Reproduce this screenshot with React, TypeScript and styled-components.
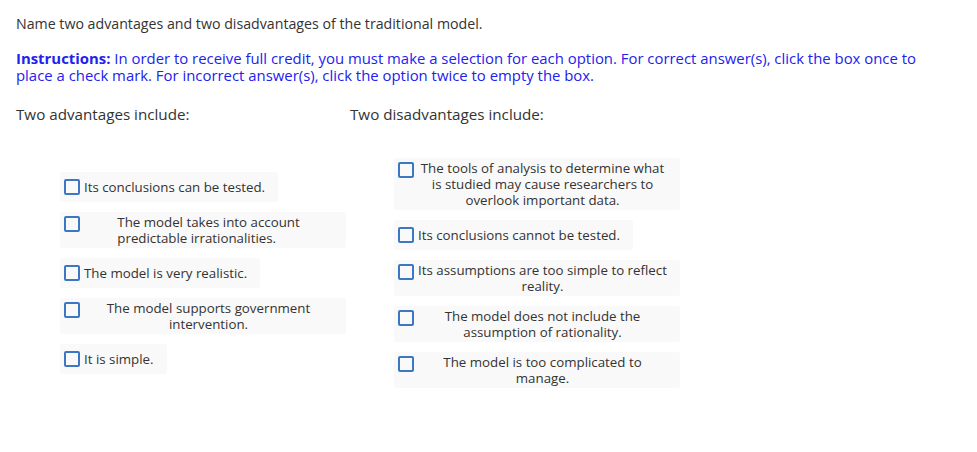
import * as React from 'react';
import styled, { createGlobalStyle } from 'styled-components';

type Align = 'left' | 'block' | 'center';
type Option = { lines: string[]; align?: Align };

const advantages: Option[] = [
  { lines: ['Its conclusions can be tested.'] },
  { lines: ['The model takes into account', 'predictable irrationalities.'], align: 'block' },
  { lines: ['The model is very realistic.'] },
  { lines: ['The model supports government', 'intervention.'], align: 'center' },
  { lines: ['It is simple.'] },
];

const disadvantages: Option[] = [
  {
    lines: ['The tools of analysis to determine what', 'is studied may cause researchers to', 'overlook important data.'],
    align: 'center',
  },
  { lines: ['Its conclusions cannot be tested.'] },
  { lines: ['Its assumptions are too simple to reflect', 'reality.'], align: 'center' },
  { lines: ['The model does not include the', 'assumption of rationality.'], align: 'center' },
  { lines: ['The model is too complicated to', 'manage.'], align: 'center' },
];

const OptionRow: React.FC<{ option: Option }> = ({ option }) => {
  const multi = option.lines.length > 1;
  return (
    <Row $multi={multi}>
      <Box $multi={multi} />
      <LabelCell>
        <Label $align={option.align || 'left'}>
          {option.lines.map((line, i) => (
            <React.Fragment key={line}>
              {i > 0 && <br />}
              {line}
            </React.Fragment>
          ))}
        </Label>
      </LabelCell>
    </Row>
  );
};

export default function App() {
  return (
    <>
      <GlobalStyle />
      <Page>
        <Prompt>Name two advantages and two disadvantages of the traditional model.</Prompt>
        <Instructions>
          <b>Instructions:</b>{' '}
          <span>
            In order to receive full credit, you must make a selection for each option. For correct answer(s), click
            the box once to place a check mark. For incorrect answer(s), click the option twice to empty the box.
          </span>
        </Instructions>
        <Columns>
          <Heading>Two advantages include:</Heading>
          <Heading>Two disadvantages include:</Heading>
          <OptionList>
            {advantages.map(o => <OptionRow key={o.lines[0]} option={o} />)}
          </OptionList>
          <OptionList>
            {disadvantages.map(o => <OptionRow key={o.lines[0]} option={o} />)}
          </OptionList>
        </Columns>
      </Page>
    </>
  );
}

const GlobalStyle = createGlobalStyle`
  body {
    margin: 0;
    background: #fff;
    font-family: "Open Sans", Lato, sans-serif;
    color: #333;
  }
`;

const Page = styled.div`
  padding: 14px 16px;
  width: 977px;
  box-sizing: border-box;
`;

const Prompt = styled.p`
  margin: 0;
  font-size: 14.2px;
  line-height: 20px;
`;

const Instructions = styled.p`
  margin: 16px 0 0;
  font-size: 14.9px;
  line-height: 17px;
  color: #2222ee;
  width: 915px;

  b {
    font-weight: 700;
  }
`;

const Columns = styled.div`
  display: grid;
  grid-template-columns: 334px 334px;
  align-items: center;
  margin-top: 20px;
`;

const Heading = styled.div`
  font-size: 15.2px;
  line-height: 20px;
  margin-bottom: 34px;
`;

const OptionList = styled.div`
  display: flex;
  flex-direction: column;
  align-items: flex-start;
  gap: 10px;
  padding-left: 44px;
`;

const Row = styled.div<{ $multi: boolean }>`
  display: flex;
  align-items: ${p => (p.$multi ? 'flex-start' : 'center')};
  min-height: 30px;
  width: ${p => (p.$multi ? '286px' : 'auto')};
  box-sizing: border-box;
  padding: 2px 13px 2px 4px;
  background: #f9f9f9;
  border-radius: 3px;
`;

const Box = styled.span<{ $multi: boolean }>`
  flex: none;
  width: 16px;
  height: 16px;
  box-sizing: border-box;
  border: 2px solid #3b77c2;
  border-radius: 2px;
  margin-top: ${p => (p.$multi ? '2px' : '0')};
`;

const LabelCell = styled.div`
  flex: 1;
  min-width: 0;
  padding-left: 4px;
  font-size: 13.3px;
  line-height: 16px;
  white-space: nowrap;
`;

const Label = styled.div<{ $align: Align }>`
  width: fit-content;
  margin: ${p => (p.$align === 'left' ? '0' : '0 auto')};
  text-align: ${p => (p.$align === 'center' ? 'center' : 'left')};
`;
